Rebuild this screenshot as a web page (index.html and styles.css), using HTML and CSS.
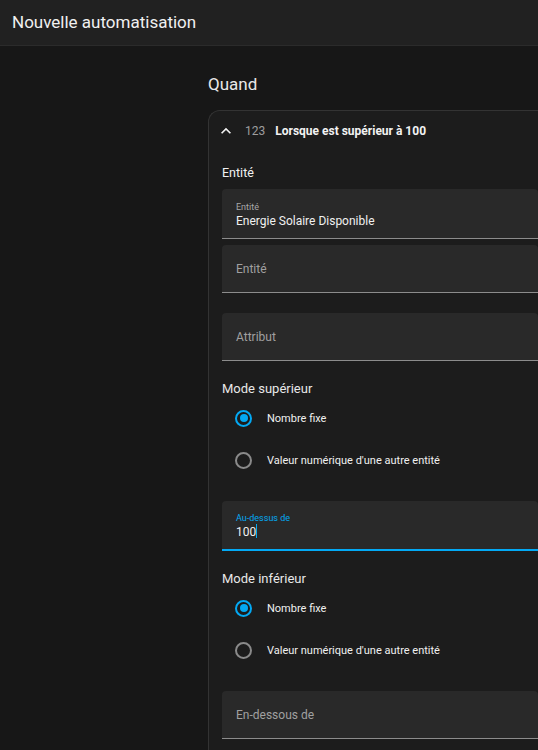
FILE: index.html
```html
<!DOCTYPE html>
<html lang="fr">
<head>
  <meta charset="UTF-8">
  <title>Nouvelle automatisation</title>
  <link rel="stylesheet" href="styles.css">
</head>
<body>
  <div id="topbar">
    <div class="topbar-title">Nouvelle automatisation</div>
  </div>

  <div id="content">
    <h2 class="section-title">Quand</h2>

    <div class="trigger-card">
      <div class="trigger-header">
        <svg class="chevron" viewBox="0 0 24 24" width="18" height="18">
          <path d="M7.41,15.41L12,10.83L16.59,15.41L18,14L12,8L6,14L7.41,15.41Z" fill="currentColor"/>
        </svg>
        <span class="trigger-icon">123</span>
        <span class="trigger-title">Lorsque est supérieur à 100</span>
      </div>

      <div class="trigger-body">
        <div class="group-label">Entité</div>

        <div class="field filled">
          <span class="field-label">Entité</span>
          <span class="field-value">Energie Solaire Disponible</span>
        </div>
        <div class="field empty next">
          <span class="field-placeholder">Entité</span>
        </div>

        <div class="field empty spaced">
          <span class="field-placeholder">Attribut</span>
        </div>

        <div class="group-label mode">Mode supérieur</div>
        <div class="radio-list">
          <label class="radio-row">
            <span class="radio checked"></span>
            <span class="radio-text">Nombre fixe</span>
          </label>
          <label class="radio-row">
            <span class="radio"></span>
            <span class="radio-text">Valeur numérique d'une autre entité</span>
          </label>
        </div>

        <div class="field filled focused">
          <span class="field-label">Au-dessus de</span>
          <span class="field-value">100<span class="caret"></span></span>
        </div>

        <div class="group-label mode">Mode inférieur</div>
        <div class="radio-list">
          <label class="radio-row">
            <span class="radio checked"></span>
            <span class="radio-text">Nombre fixe</span>
          </label>
          <label class="radio-row">
            <span class="radio"></span>
            <span class="radio-text">Valeur numérique d'une autre entité</span>
          </label>
        </div>

        <div class="field empty">
          <span class="field-placeholder">En-dessous de</span>
        </div>
      </div>
    </div>
  </div>
</body>
</html>
```

FILE: styles.css
```css
body {
  margin: 0;
  font-family: Roboto, "Noto Sans", sans-serif;
  background-color: #171717;
  color: #e1e1e1;
  overflow: hidden;
  width: 538px;
  height: 750px;
}

#topbar {
  display: flex;
  align-items: center;
  height: 45px;
  padding: 0 12px;
  background-color: #212121;
  border-bottom: 1px solid #2b2b2b;
}

.topbar-title {
  font-size: 17px;
  color: #f0f0f0;
  margin-top: -2px;
}

#content {
  padding-left: 208px;
  width: 330px;
}

.section-title {
  margin: 26px 0 14px;
  font-size: 17px;
  font-weight: 400;
  line-height: 24px;
  color: #e8e8e8;
}

.trigger-card {
  background-color: #1c1c1c;
  border: 1px solid #333;
  border-right: none;
  border-radius: 12px 0 0 0;
  overflow: hidden;
}

.trigger-header {
  display: flex;
  align-items: center;
  height: 40px;
  padding-left: 7px;
}

.chevron {
  color: #f2f2f2;
  width: 20px;
  height: 20px;
}

.trigger-icon {
  margin-left: 9px;
  font-size: 12px;
  color: #9e9e9e;
}

.trigger-title {
  margin-left: 10px;
  font-size: 12px;
  font-weight: 700;
  color: #f2f2f2;
}

.trigger-body {
  padding: 0 0 40px 13px;
}

.group-label {
  font-size: 12.5px;
  font-weight: 400;
  line-height: 16px;
  margin: 14px 0 8px;
  color: #f2f2f2;
}

.group-label.mode {
  margin: 20px 0 0;
  font-size: 13px;
  color: #e8e8e8;
}

.field {
  display: flex;
  flex-direction: column;
  justify-content: center;
  height: 47px;
  padding: 0 14px;
  background-color: #292929;
  border-radius: 4px 4px 0 0;
  border-bottom: 1px solid #8c8c8c;
}

.field.next {
  margin-top: 6px;
}

.field.spaced {
  margin-top: 20px;
}

.field.filled {
  padding-top: 2px;
}

.field-label {
  font-size: 9px;
  line-height: 12px;
  color: #a8a8a8;
}

.field-value {
  font-size: 12px;
  line-height: 16px;
  color: #f0f0f0;
}

.field-placeholder {
  font-size: 12px;
  color: #a0a0a0;
}

.field.focused {
  border-bottom: 2px solid #03a9f4;
  height: 46px;
}

.field.focused .field-label {
  color: #03a9f4;
}

.caret {
  display: inline-block;
  width: 1px;
  height: 14px;
  background-color: #03a9f4;
  vertical-align: -2px;
}

.radio-list {
  display: flex;
  flex-direction: column;
  padding: 0 0 20px;
}

.radio-row {
  display: flex;
  align-items: center;
  height: 42px;
  padding-left: 13px;
}

.radio {
  box-sizing: border-box;
  width: 17px;
  height: 17px;
  border: 2px solid #8a8a8a;
  border-radius: 50%;
  position: relative;
}

.radio.checked {
  border-color: #03a9f4;
}

.radio.checked::after {
  content: "";
  position: absolute;
  top: 2.5px;
  left: 2.5px;
  width: 8px;
  height: 8px;
  border-radius: 50%;
  background-color: #03a9f4;
}

.radio-text {
  margin-left: 15px;
  font-size: 11px;
  font-weight: 400;
  color: #f0f0f0;
}
```
